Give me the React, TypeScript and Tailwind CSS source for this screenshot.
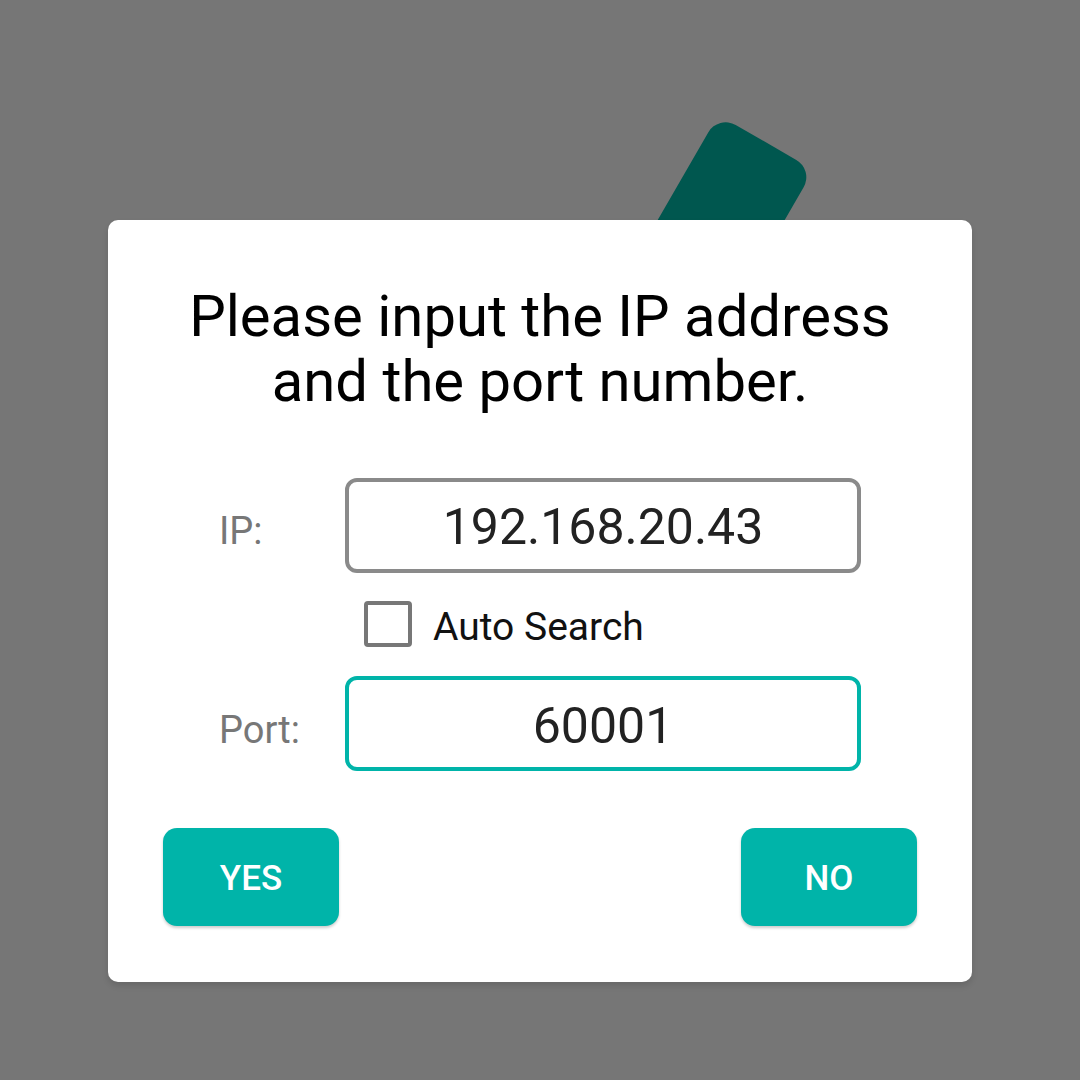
export default function App() {
  return (
    <div
      className="relative w-[1080px] h-[1080px] bg-[#767676] overflow-hidden"
      style={{ fontFamily: 'Roboto, "Noto Sans", sans-serif' }}
    >
      {/* tilted card peeking out behind the dialog */}
      <div className="absolute left-[661px] top-[129px] w-[110px] h-[200px] rotate-[30deg] rounded-[20px] bg-[#00574f]" />

      <div className="absolute left-[108px] top-[220px] w-[864px] h-[762px] bg-white rounded-[10px] shadow-[0_4px_6px_rgba(0,0,0,0.12)] flex flex-col pt-[64px]">
        <h1 className="text-center text-[58px] leading-[65px] text-black font-normal">
          Please input the IP address
          <br />
          and the port number.
        </h1>

        <div className="px-[111px] mt-[64px] flex flex-col">
          <div className="flex items-baseline">
            <span className="w-[126px] text-[38px] text-[#777]">IP:</span>
            <div className="w-[516px] h-[95px] border-[4px] border-[#8a8a8a] rounded-[12px] flex items-center justify-center pt-[4px] text-[50px] text-[#222]">
              192.168.20.43
            </div>
          </div>

          <div className="flex items-center ml-[145px] mt-[28px] h-[46px]">
            <div className="w-[48px] h-[46px] border-[4px] border-[#777] rounded-[4px]" />
            <span className="ml-[21px] pt-[6px] text-[39px] text-[#111]">Auto Search</span>
          </div>

          <div className="flex items-baseline mt-[29px]">
            <span className="w-[126px] text-[38px] text-[#777]">Port:</span>
            <div className="w-[516px] h-[95px] border-[4px] border-[#00b4a9] rounded-[12px] flex items-center justify-center pt-[6px] text-[50px] text-[#222]">
              60001
            </div>
          </div>
        </div>

        <div className="flex justify-between px-[55px] mt-[57px]">
          <button className="w-[176px] h-[98px] rounded-[14px] bg-[#00b4a9] text-white text-[35px] font-medium pt-[5px] shadow-[0_2px_3px_rgba(0,0,0,0.2)]">
            YES
          </button>
          <button className="w-[176px] h-[98px] rounded-[14px] bg-[#00b4a9] text-white text-[35px] font-medium pt-[5px] shadow-[0_2px_3px_rgba(0,0,0,0.2)]">
            NO
          </button>
        </div>
      </div>
    </div>
  );
}
